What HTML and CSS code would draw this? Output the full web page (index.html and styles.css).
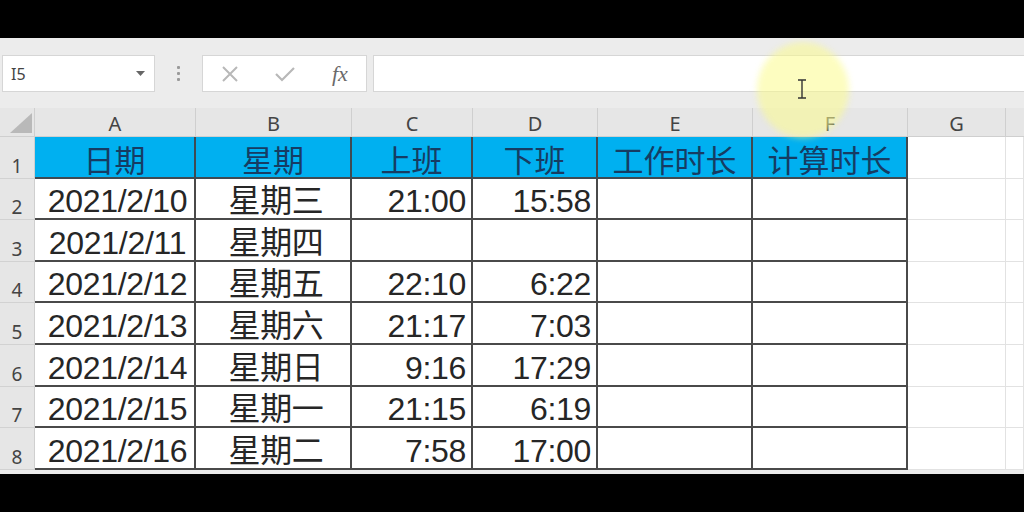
FILE: index.html
```html
<!DOCTYPE html>
<html lang="zh-CN">
<head>
<meta charset="utf-8">
<title>工作时长</title>
<link rel="stylesheet" href="styles.css">
</head>
<body>
<div class="screen">
  <div class="black-top"></div>
  <div class="app">
    <div class="toolbar">
      <div class="namebox">
        <span class="ref">I5</span>
        <svg class="caret" width="9" height="5" viewBox="0 0 9 5"><path d="M0 0 H9 L4.5 5 Z" fill="#666"/></svg>
      </div>
      <div class="grip"><span></span><span></span><span></span></div>
      <div class="fbtns">
        <svg class="ico" width="20" height="20" viewBox="0 0 20 20"><path d="M3 3 L17 17 M17 3 L3 17" stroke="#b8b8b8" stroke-width="2" fill="none"/></svg>
        <svg class="ico" width="22" height="20" viewBox="0 0 22 20"><path d="M2 10 L8 16 L20 4" stroke="#b8b8b8" stroke-width="2.2" fill="none"/></svg>
        <span class="fx">fx</span>
      </div>
      <div class="finput"></div>
    </div>
    <div class="sheet">
      <div class="corner"><svg width="22" height="20" viewBox="0 0 22 20"><path d="M22 0 V20 H0 Z" fill="#b9b9b9"/></svg></div>
      <div class="ch">A</div><div class="ch">B</div><div class="ch">C</div><div class="ch">D</div><div class="ch">E</div><div class="ch">F</div><div class="ch">G</div><div class="ch last"></div>

      <div class="rh">1</div>
      <div class="hd">日期</div><div class="hd">星期</div><div class="hd">上班</div><div class="hd">下班</div><div class="hd">工作时长</div><div class="hd">计算时长</div>
      <div class="gl"></div><div class="gl"></div>

      <div class="rh">2</div>
      <div class="td ctr">2021/2/10</div><div class="td ctr">星期三</div><div class="td num">21:00</div><div class="td num">15:58</div><div class="td"></div><div class="td"></div>
      <div class="gl"></div><div class="gl"></div>

      <div class="rh">3</div>
      <div class="td ctr">2021/2/11</div><div class="td ctr">星期四</div><div class="td num"></div><div class="td num"></div><div class="td"></div><div class="td"></div>
      <div class="gl"></div><div class="gl"></div>

      <div class="rh">4</div>
      <div class="td ctr">2021/2/12</div><div class="td ctr">星期五</div><div class="td num">22:10</div><div class="td num">6:22</div><div class="td"></div><div class="td"></div>
      <div class="gl"></div><div class="gl"></div>

      <div class="rh">5</div>
      <div class="td ctr">2021/2/13</div><div class="td ctr">星期六</div><div class="td num">21:17</div><div class="td num">7:03</div><div class="td"></div><div class="td"></div>
      <div class="gl"></div><div class="gl"></div>

      <div class="rh">6</div>
      <div class="td ctr">2021/2/14</div><div class="td ctr">星期日</div><div class="td num">9:16</div><div class="td num">17:29</div><div class="td"></div><div class="td"></div>
      <div class="gl"></div><div class="gl"></div>

      <div class="rh">7</div>
      <div class="td ctr">2021/2/15</div><div class="td ctr">星期一</div><div class="td num">21:15</div><div class="td num">6:19</div><div class="td"></div><div class="td"></div>
      <div class="gl"></div><div class="gl"></div>

      <div class="rh">8</div>
      <div class="td ctr">2021/2/16</div><div class="td ctr">星期二</div><div class="td num">7:58</div><div class="td num">17:00</div><div class="td"></div><div class="td"></div>
      <div class="gl"></div><div class="gl"></div>
    </div>
    <div class="spot"></div>
    <svg class="ibeam" width="10" height="20" viewBox="0 0 10 20"><path d="M1 1 H9 M5 1 V19 M1 19 H9" stroke="#333" stroke-width="1.4" fill="none"/></svg>
  </div>
</div>
</body>
</html>
```

FILE: styles.css
```css
* { box-sizing: border-box; }
html, body { margin: 0; padding: 0; }
body {
  width: 1024px;
  height: 512px;
  background: #000;
  overflow: hidden;
  font-family: "Liberation Sans", "Noto Sans CJK SC", sans-serif;
}
.screen { width: 1024px; height: 512px; display: flex; flex-direction: column; }
.black-top { height: 38px; background: #000; flex: none; }
.app {
  position: relative;
  height: 436px;
  background: #ececec;
  overflow: hidden;
  flex: none;
}
.toolbar {
  height: 70px;
  display: flex;
  align-items: flex-start;
  padding-top: 17px;
  padding-left: 2px;
}
.namebox {
  width: 153px;
  height: 37px;
  background: #fff;
  border: 1px solid #d6d6d6;
  display: flex;
  align-items: center;
  justify-content: space-between;
  padding: 0 9px 0 8px;
}
.ref { font-family: "Noto Sans", sans-serif; font-size: 16px; color: #444; }
.grip {
  width: 47px;
  height: 37px;
  display: flex;
  flex-direction: column;
  align-items: center;
  justify-content: center;
  gap: 3px;
}
.grip span { width: 3px; height: 3px; background: #9a9a9a; border-radius: 1px; }
.fbtns {
  width: 165px;
  height: 37px;
  background: #fff;
  border: 1px solid #d6d6d6;
  display: flex;
  align-items: center;
  padding-left: 17px;
  gap: 34px;
}
.fx {
  font-family: "Liberation Serif", serif;
  font-style: italic;
  font-size: 22px;
  color: #6a6a6a;
  margin-left: 2px;
}
.finput {
  flex: 1;
  height: 37px;
  margin-left: 6px;
  background: #fff;
  border: 1px solid #d6d6d6;
  border-right: none;
}
.sheet {
  display: grid;
  grid-template-columns: 35px 161px 156px 121px 125px 155px 155px 98px 1fr;
  grid-template-rows: 29px 42px 41px 42px 41px 42px 42px 41px 42px;
  background: #fff;
}
.corner {
  background: #e6e6e6;
  border-right: 1px solid #cfcfcf;
  border-bottom: 1px solid #cfcfcf;
  display: flex;
  align-items: flex-end;
  justify-content: flex-end;
  padding: 0 2px 3px 0;
}
.ch {
  background: #e6e6e6;
  border-right: 1px solid #cfcfcf;
  border-bottom: 1px solid #cfcfcf;
  font-family: "Noto Sans", sans-serif;
  font-size: 20px;
  color: #444;
  display: flex;
  align-items: center;
  justify-content: center;
  padding-top: 2px;
}
.ch.last { border-right: none; }
.rh {
  grid-column: 1;
  background: #e6e6e6;
  border-right: 1px solid #cfcfcf;
  border-bottom: 1px solid #d2d2d2;
  font-family: "Noto Sans", sans-serif;
  font-size: 19px;
  color: #444;
  display: flex;
  align-items: flex-end;
  justify-content: center;
  padding-bottom: 0;
  line-height: 1.2;
}
.hd {
  background: #00b0f0;
  border-right: 2px solid #3f4a52;
  border-bottom: 2px solid #3f4a52;
  font-family: "Noto Sans CJK SC", sans-serif;
  font-weight: 400;
  font-size: 31px;
  color: #163c63;
  display: flex;
  align-items: flex-end;
  justify-content: center;
  line-height: 1;
  padding-bottom: 3px;
}
.td {
  background: #fff;
  border-right: 2px solid #4a4a4a;
  border-bottom: 2px solid #4a4a4a;
  font-size: 32px;
  color: #262626;
  display: flex;
  align-items: flex-end;
  line-height: 1;
  padding-bottom: 1px;
  letter-spacing: -0.3px;
}
.td.ctr { justify-content: center; padding-left: 6px; }
.td.num { justify-content: flex-end; padding-right: 5px; }
.gl {
  background: #fff;
  border-right: 1px solid #e2e2e2;
  border-bottom: 1px solid #e2e2e2;
}
.spot {
  position: absolute;
  left: 757px;
  top: 4px;
  width: 92px;
  height: 96px;
  border-radius: 50%;
  background: rgba(252, 252, 140, 0.55);
  filter: blur(3px);
}
.ibeam {
  position: absolute;
  left: 797px;
  top: 41px;
}
```
